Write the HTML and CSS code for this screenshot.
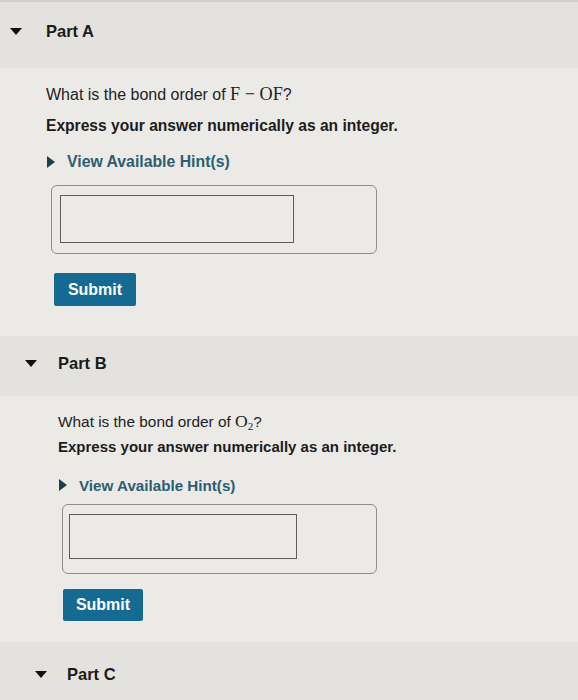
FILE: index.html
```html
<!DOCTYPE html>
<html>
<head>
<meta charset="utf-8">
<link rel="stylesheet" href="styles.css">
</head>
<body>
<div class="page">
  <section class="part part-a">
    <div class="part-head">
      <span class="caret"></span>
      <span class="part-title">Part A</span>
    </div>
    <div class="part-body">
      <p class="question">What is the bond order of <span class="math">F − OF</span>?</p>
      <p class="instr">Express your answer numerically as an integer.</p>
      <div class="hint"><span class="hint-caret"></span>View Available Hint(s)</div>
      <div class="answer-box"><div class="answer-input"></div></div>
      <button class="submit">Submit</button>
    </div>
  </section>
  <section class="part part-b">
    <div class="part-head">
      <span class="caret"></span>
      <span class="part-title">Part B</span>
    </div>
    <div class="part-body">
      <p class="question">What is the bond order of <span class="math">O<sub>2</sub></span>?</p>
      <p class="instr">Express your answer numerically as an integer.</p>
      <div class="hint"><span class="hint-caret"></span>View Available Hint(s)</div>
      <div class="answer-box"><div class="answer-input"></div></div>
      <button class="submit">Submit</button>
    </div>
  </section>
  <section class="part part-c">
    <div class="part-head">
      <span class="caret"></span>
      <span class="part-title">Part C</span>
    </div>
  </section>
</div>
</body>
</html>
```

FILE: styles.css
```css
html, body {
  margin: 0;
  padding: 0;
}
body {
  background: #e9e8e5;
  font-family: "Liberation Sans", Arial, sans-serif;
  color: #1e1e1e;
}
.page {
  width: 578px;
  height: 700px;
  overflow: hidden;
  border-top: 2px solid #d2d1ce;
  box-sizing: border-box;
}
.part {
  --indent: 46px;
  --arrow: 10px;
  --fs: 15.6px;
}
.part-head {
  display: flex;
  align-items: center;
  height: var(--head-h, 66px);
  box-sizing: border-box;
  padding-bottom: var(--head-pb, 8px);
  background: #e3e2df;
}
.caret {
  margin-left: var(--arrow);
  width: 0;
  height: 0;
  border-left: 6px solid transparent;
  border-right: 6px solid transparent;
  border-top: 7px solid #111;
}
.part-title {
  margin-left: calc(var(--indent) - var(--arrow) - 12px);
  font-size: 16.5px;
  font-weight: 600;
  color: #1b1b1b;
}
.part-body {
  background: #ebeae7;
  padding-left: var(--indent);
  padding-top: var(--body-top, 16px);
  padding-bottom: var(--body-bottom, 30px);
}
.question {
  margin: 0;
  font-size: calc(var(--fs) + 0.4px);
  line-height: 20px;
  color: #222;
}
.math {
  font-family: "Liberation Serif", "Times New Roman", serif;
  font-size: calc(var(--fs) + 2.6px);
}
.math sub {
  font-size: 11px;
  line-height: 0;
  vertical-align: -3px;
}
.instr {
  margin: var(--instr-gap, 11px) 0 0;
  font-size: var(--fs);
  line-height: 20px;
  font-weight: bold;
  color: #1c1c1c;
}
.hint {
  display: flex;
  align-items: center;
  margin-top: var(--hint-gap, 16px);
  height: 20px;
  font-size: calc(var(--fs) + 0.2px);
  font-weight: bold;
  color: #2c5e72;
}
.hint-caret {
  width: 0;
  height: 0;
  border-top: 6px solid transparent;
  border-bottom: 6px solid transparent;
  border-left: 8px solid #1d3f4d;
  margin-left: 1px;
  margin-right: 12px;
}
.answer-box {
  margin-top: var(--box-gap, 13px);
  margin-left: var(--box-x, 5px);
  width: var(--box-w, 326px);
  height: var(--box-h, 69px);
  box-sizing: border-box;
  border: 1.5px solid #8f8c89;
  border-radius: 6px;
  padding-top: var(--in-top, 9px);
  padding-left: var(--in-x, 8px);
}
.answer-input {
  width: var(--in-w, 234px);
  height: var(--in-h, 48px);
  box-sizing: border-box;
  border: 1.5px solid #5e5b59;
  background: #ecebe8;
}
.submit {
  display: block;
  margin-top: var(--sub-gap, 19px);
  margin-left: var(--sub-x, 8px);
  width: var(--sub-w, 82px);
  height: var(--sub-h, 33px);
  border: none;
  border-radius: 2px;
  background: #156a91;
  color: #fff;
  font-family: "Liberation Sans", Arial, sans-serif;
  font-size: 16px;
  font-weight: bold;
  padding: 0;
}
.part-b {
  --indent: 58px;
  --arrow: 25px;
  --fs: 15px;
  --head-h: 60px;
  --head-pb: 5px;
  --body-top: 15px;
  --body-bottom: 21px;
  --instr-gap: 5px;
  --hint-gap: 18px;
  --box-gap: 9px;
  --box-x: 4px;
  --box-w: 315px;
  --box-h: 70px;
  --in-top: 9px;
  --in-x: 6px;
  --in-w: 228px;
  --in-h: 45px;
  --sub-gap: 15px;
  --sub-x: 5px;
  --sub-w: 80px;
  --sub-h: 32px;
}
.part-c {
  --indent: 67px;
  --arrow: 35px;
  --head-h: 66px;
  --head-pb: 2px;
}
```
